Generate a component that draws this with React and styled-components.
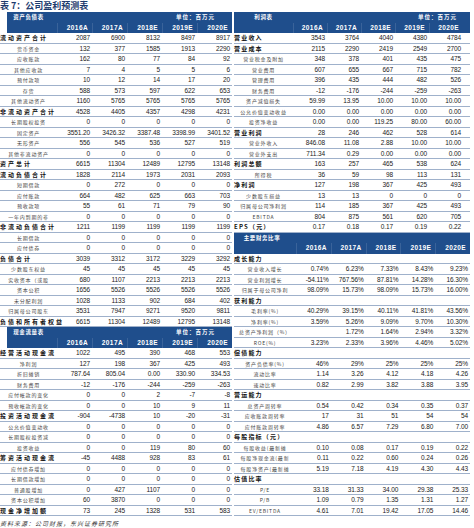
import React from 'react';
import styled, { createGlobalStyle } from 'styled-components';

const GlobalStyle = createGlobalStyle`
  html, body {
    margin: 0;
    padding: 0;
    background: #fff;
  }
  body {
    font-family: "Liberation Sans", Arial, sans-serif;
  }
`;

const Page = styled.div`
  width: 474px;
  height: 528px;
  overflow: hidden;
  display: flex;
  flex-direction: column;
`;

const Title = styled.div`
  height: 13px;
  font-family: "Noto Sans CJK SC", sans-serif;
  font-weight: 700;
  font-size: 9px;
  line-height: 11px;
  color: #1c3b6e;
  white-space: nowrap;
`;

const Tables = styled.div`
  display: flex;
  gap: 2px;
`;

const Column = styled.div`
  width: ${p => p.$w}px;
  display: flex;
  flex-direction: column;
`;

const Head = styled.div`
  margin-left: ${p => p.$indent || 0}px;
  background: #1f4e8c;
  color: #fff;
`;

const HeadTop = styled.div`
  height: 10.5px;
  display: flex;
  align-items: center;
  justify-content: space-between;
  font-family: "Noto Sans CJK SC", sans-serif;
  font-weight: 700;
  font-size: 5.5px;
  white-space: nowrap;
`;

const HeadName = styled.div`
  width: ${p => p.$w}px;
  text-align: center;
  letter-spacing: 0.6px;
`;

const HeadUnit = styled.div`
  padding-right: ${p => p.$pr}px;
  letter-spacing: 1px;
`;

const YearRow = styled.div`
  height: 10.5px;
  display: grid;
  grid-template-columns: ${p => p.$cols};
  align-items: center;
`;

const Year = styled.div`
  font-family: "Liberation Sans", Arial, sans-serif;
  font-weight: 700;
  font-size: 6.5px;
  letter-spacing: 0.4px;
  text-align: right;
  padding-right: 4px;
  line-height: 10.5px;
  border-left: 1px solid rgba(255, 255, 255, 0.12);
`;

const Row = styled.div`
  display: grid;
  grid-template-columns: ${p => p.$cols};
  height: 10.5px;
  box-sizing: border-box;
  border-bottom: 1px solid #9fb1cb;
  align-items: center;
`;

const Label = styled.div`
  font-family: "Noto Sans CJK SC", sans-serif;
  font-size: ${p => (p.$bold ? 6 : 5)}px;
  font-weight: ${p => (p.$bold ? 700 : 400)};
  letter-spacing: ${p => (p.$bold ? p.$ls : 0.8)}px;
  color: ${p => (p.$bold ? '#111' : '#444')};
  text-align: ${p => (p.$bold ? 'left' : 'center')};
  white-space: nowrap;
  line-height: 9px;
`;

const Num = styled.div`
  font-family: "Liberation Sans", Arial, sans-serif;
  font-size: 6.5px;
  letter-spacing: -0.1px;
  color: #222;
  text-align: right;
  padding-right: 2px;
  white-space: nowrap;
  line-height: 9px;
`;

const Source = styled.div`
  padding-top: 3px;
  font-family: "Noto Sans CJK SC", sans-serif;
  font-style: italic;
  font-size: 6px;
  letter-spacing: 1px;
  color: #333;
  white-space: nowrap;
`;

const YEARS = ['2016A', '2017A', '2018E', '2019E', '2020E'];

const LC = '57px repeat(5, 35px)';
const LH = '50px repeat(5, 35px)';
const R1 = '59px repeat(5, 34px) 1fr';
const R2 = '62px repeat(5, 34.8px)';

const r = (l, v, b) => ({ l, v, b });

const left = [
  { head: '资产负债表', unit: '单位：百万元', cols: LH, indent: 7, nameW: 43, pr: 17 },
  {
    cols: LC,
    rows: [
      r('流动资产合计', ['2087', '6900', '8132', '8497', '8917'], true),
      r('货币资金', ['132', '377', '1585', '1913', '2290']),
      r('应收账款', ['162', '80', '77', '84', '92']),
      r('其他应收款', ['7', '4', '5', '5', '6']),
      r('预付款项', ['10', '12', '14', '17', '20']),
      r('存货', ['588', '573', '597', '622', '653']),
      r('其他流动资产', ['1160', '5765', '5765', '5765', '5765']),
      r('非流动资产合计', ['4528', '4405', '4357', '4298', '4231'], true),
      r('长期股权投资', ['0', '0', '0', '0', '0']),
      r('固定资产', ['3551.20', '3426.32', '3387.48', '3398.99', '3401.52']),
      r('无形资产', ['556', '545', '536', '527', '519']),
      r('其他非流动资产', ['0', '0', '0', '0', '0']),
      r('资产总计', ['6615', '11304', '12489', '12795', '13148'], true),
      r('流动负债合计', ['1828', '2114', '1973', '2031', '2093'], true),
      r('短期借款', ['0', '272', '0', '0', '0']),
      r('应付账款', ['664', '482', '625', '663', '703']),
      r('预收款项', ['55', '61', '71', '79', '90']),
      r('一年内到期的非', ['0', '0', '0', '0', '0']),
      r('非流动负债合计', ['1211', '1199', '1199', '1199', '1199'], true),
      r('长期借款', ['0', '0', '0', '0', '0']),
      r('应付债券', ['0', '0', '0', '0', '0']),
      r('负债合计', ['3039', '3312', '3172', '3229', '3292'], true),
      r('少数股东权益', ['45', '45', '45', '45', '45']),
      r('实收资本（或股', ['680', '1107', '2213', '2213', '2213']),
      r('资本公积', ['1656', '5526', '5526', '5526', '5526']),
      r('未分配利润', ['1028', '1133', '902', '684', '402']),
      r('归属母公司股东', ['3531', '7947', '9271', '9520', '9811']),
      r('负债和所有者权益', ['6615', '11304', '12489', '12795', '13148'], true),
    ],
  },
  { head: '现金流量表', unit: '单位：百万元', cols: LH, indent: 7, nameW: 43, pr: 17 },
  {
    cols: LC,
    rows: [
      r('经营活动现金流', ['1022', '495', '390', '468', '553'], true),
      r('净利润', ['127', '198', '367', '425', '493']),
      r('折旧摊销', ['787.64', '805.04', '0.00', '330.90', '334.53']),
      r('财务费用', ['-12', '-176', '-244', '-259', '-263']),
      r('应付帐款的变化', ['0', '0', '2', '-7', '-8']),
      r('预收帐款的变化', ['0', '0', '10', '9', '11']),
      r('投资活动现金流', ['-904', '-4738', '10', '-20', '-31'], true),
      r('公允价值变动收', ['0', '0', '0', '0', '0']),
      r('长期股权投资减', ['0', '0', '0', '0', '0']),
      r('投资收益', ['0', '0', '119', '80', '60']),
      r('筹资活动现金流', ['-45', '4488', '928', '83', '61'], true),
      r('应付债券增加', ['0', '0', '0', '0', '0']),
      r('长期借款增加', ['0', '0', '0', '0', '0']),
      r('普通股增加', ['0', '427', '1107', '0', '0']),
      r('资本公积增加', ['60', '3870', '0', '0', '0']),
      r('现金净增加额', ['73', '245', '1328', '531', '583'], true),
    ],
  },
];

const right = [
  { head: '利润表', unit: '单位：百万元', cols: R1, nameW: 59, pr: 13 },
  {
    cols: R1,
    rows: [
      r('营业收入', ['3543', '3764', '4040', '4380', '4784'], true),
      r('营业成本', ['2115', '2290', '2419', '2549', '2700'], true),
      r('营业税金及附加', ['348', '378', '401', '435', '475']),
      r('营业费用', ['607', '655', '667', '715', '782']),
      r('管理费用', ['396', '435', '444', '482', '526']),
      r('财务费用', ['-12', '-176', '-244', '-259', '-263']),
      r('资产减值损失', ['59.99', '13.95', '10.00', '10.00', '10.00']),
      r('公允价值变动收益', ['0.00', '0.00', '0.00', '0.00', '0.00']),
      r('投资净收益', ['0.00', '0.00', '119.25', '80.00', '60.00']),
      r('营业利润', ['28', '246', '462', '528', '614'], true),
      r('营业外收入', ['846.08', '11.08', '2.88', '10.00', '10.00']),
      r('营业外支出', ['711.34', '0.29', '0.00', '0.00', '0.00']),
      r('利润总额', ['163', '257', '465', '538', '624'], true),
      r('所得税', ['36', '59', '98', '113', '131']),
      r('净利润', ['127', '198', '367', '425', '493'], true),
      r('少数股东损益', ['13', '13', '0', '0', '0']),
      r('归属母公司净利润', ['114', '185', '367', '425', '493']),
      r('EBITDA', ['804', '875', '561', '620', '705']),
      r('EPS（元）', ['0.17', '0.18', '0.17', '0.19', '0.22'], true),
    ],
  },
  { head: '主要财务比率', unit: '', cols: R2, nameW: 56, pr: 13 },
  {
    cols: R2,
    rows: [
      r('成长能力', [], true),
      r('营业收入增长', ['0.74%', '6.23%', '7.33%', '8.43%', '9.23%']),
      r('营业利润增长', ['-54.11%', '767.56%', '87.81%', '14.28%', '16.30%']),
      r('归属于母公司净利', ['98.09%', '15.73%', '98.09%', '15.73%', '16.00%']),
      r('获利能力', [], true),
      r('毛利率(%)', ['40.29%', '39.15%', '40.11%', '41.81%', '43.56%']),
      r('净利率(%)', ['3.59%', '5.26%', '9.09%', '9.70%', '10.30%']),
      r('总资产净利润（%）', ['', '1.72%', '1.64%', '2.94%', '3.32%']),
      r('ROE(%)', ['3.23%', '2.33%', '3.96%', '4.46%', '5.02%']),
      r('偿债能力', [], true),
      r('资产负债率(%)', ['46%', '29%', '25%', '25%', '25%']),
      r('流动比率', ['1.14', '3.26', '4.12', '4.18', '4.26']),
      r('速动比率', ['0.82', '2.99', '3.82', '3.88', '3.95']),
      r('营运能力', [], true),
      r('总资产周转率', ['0.54', '0.42', '0.34', '0.35', '0.37']),
      r('应收账款周转率', ['17', '31', '51', '54', '54']),
      r('应付账款周转率', ['4.86', '6.57', '7.29', '6.80', '7.00']),
      r('每股指标（元）', [], true),
      r('每股收益(最新摊', ['0.10', '0.08', '0.17', '0.19', '0.22']),
      r('每股净现金流(最新', ['0.11', '0.22', '0.60', '0.24', '0.26']),
      r('每股净资产(最新摊', ['5.19', '7.18', '4.19', '4.30', '4.43']),
      r('估值比率', [], true),
      r('P/E', ['33.18', '31.33', '34.00', '29.38', '25.33']),
      r('P/B', ['1.09', '0.79', '1.35', '1.31', '1.27']),
      r('EV/EBITDA', ['4.61', '7.01', '19.42', '17.05', '14.46']),
    ],
  },
];

const Block = ({ block, ls }) => {
  if (block.head) {
    return (
      <Head $indent={block.indent}>
        <HeadTop>
          <HeadName $w={block.nameW}>{block.head}</HeadName>
          <HeadUnit $pr={block.pr}>{block.unit}</HeadUnit>
        </HeadTop>
        <YearRow $cols={block.cols}>
          <div />
          {YEARS.map(y => (
            <Year key={y}>{y}</Year>
          ))}
        </YearRow>
      </Head>
    );
  }
  return block.rows.map((row, i) => (
    <Row key={i} $cols={block.cols}>
      <Label $bold={row.b} $ls={ls}>{row.l}</Label>
      {row.v.map((v, j) => (
        <Num key={j}>{v}</Num>
      ))}
    </Row>
  ));
};

export default function App() {
  return (
    <Page>
      <GlobalStyle />
      <Title>表 7：公司盈利预测表</Title>
      <Tables>
        <Column $w={232}>
          {left.map((b, i) => (
            <Block key={i} block={b} ls={2} />
          ))}
        </Column>
        <Column $w={236}>
          {right.map((b, i) => (
            <Block key={i} block={b} ls={1.2} />
          ))}
        </Column>
      </Tables>
      <Source>资料来源：公司财报，东兴证券研究所</Source>
    </Page>
  );
}
